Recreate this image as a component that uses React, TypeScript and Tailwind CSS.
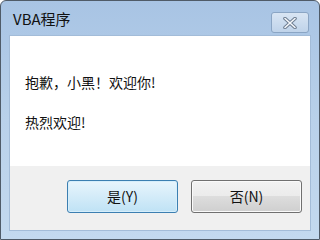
const font = { fontFamily: '"Noto Sans CJK SC", "Liberation Sans", sans-serif' };

const CloseGlyph = () => (
  <svg width="14" height="12" viewBox="0 0 14 12">
    <path d="M2 1.5 L12 10.5 M12 1.5 L2 10.5" stroke="#6d7d91" strokeWidth="3.6" strokeLinecap="round" fill="none" />
    <path d="M2 1.5 L12 10.5 M12 1.5 L2 10.5" stroke="#f4f7fb" strokeWidth="1.6" strokeLinecap="round" fill="none" />
  </svg>
);

export default function App() {
  return (
    <div
      className="flex h-[240px] w-[320px] flex-col overflow-hidden rounded-t-[6px] border border-[#4f5b68] bg-gradient-to-b from-[#a8c4e4] via-[#b9d1ea] to-[#c3d9ef]"
      style={font}
    >
      <div className="flex h-[34px] items-start justify-between pl-[12px] pr-[10px]">
        <span className="mt-[8px] text-[15px] leading-[20px] text-[#111]">VBA程序</span>
        <button
          type="button"
          className="mt-[11px] flex h-[21px] w-[38px] items-center justify-center rounded-[3px] border border-[#8aa5c4] bg-gradient-to-b from-[#d8e5f3] to-[#bfd3ea]"
        >
          <CloseGlyph />
        </button>
      </div>
      <div className="mx-[8px] mb-[8px] flex flex-1 flex-col border border-[#a3bcd8]">
        <div className="h-[130px] bg-white pl-[15px] pt-[36px] text-[14px] leading-[20px] text-[#111]">
          <p>抱歉，小黑！欢迎你!</p>
          <p className="mt-[20px]">热烈欢迎!</p>
        </div>
        <div className="flex flex-1 items-start justify-end gap-[13px] bg-[#f0f0f0] pr-[8px] pt-[14px]">
          <button
            type="button"
            className="h-[33px] w-[111px] rounded-[3px] border border-[#3c7fb1] bg-gradient-to-b from-[#e8f5fc] to-[#bfe2f5] text-[14px] text-[#111] shadow-[inset_0_0_0_1px_#d6eefb]"
          >
            是(Y)
          </button>
          <button
            type="button"
            className="h-[33px] w-[111px] rounded-[3px] border border-[#707070] bg-[linear-gradient(to_bottom,#f2f2f2_0%,#ebebeb_50%,#dddddd_50%,#cfcfcf_100%)] text-[14px] text-[#111] shadow-[inset_0_0_0_1px_#fafafa]"
          >
            否(N)
          </button>
        </div>
      </div>
    </div>
  );
}
